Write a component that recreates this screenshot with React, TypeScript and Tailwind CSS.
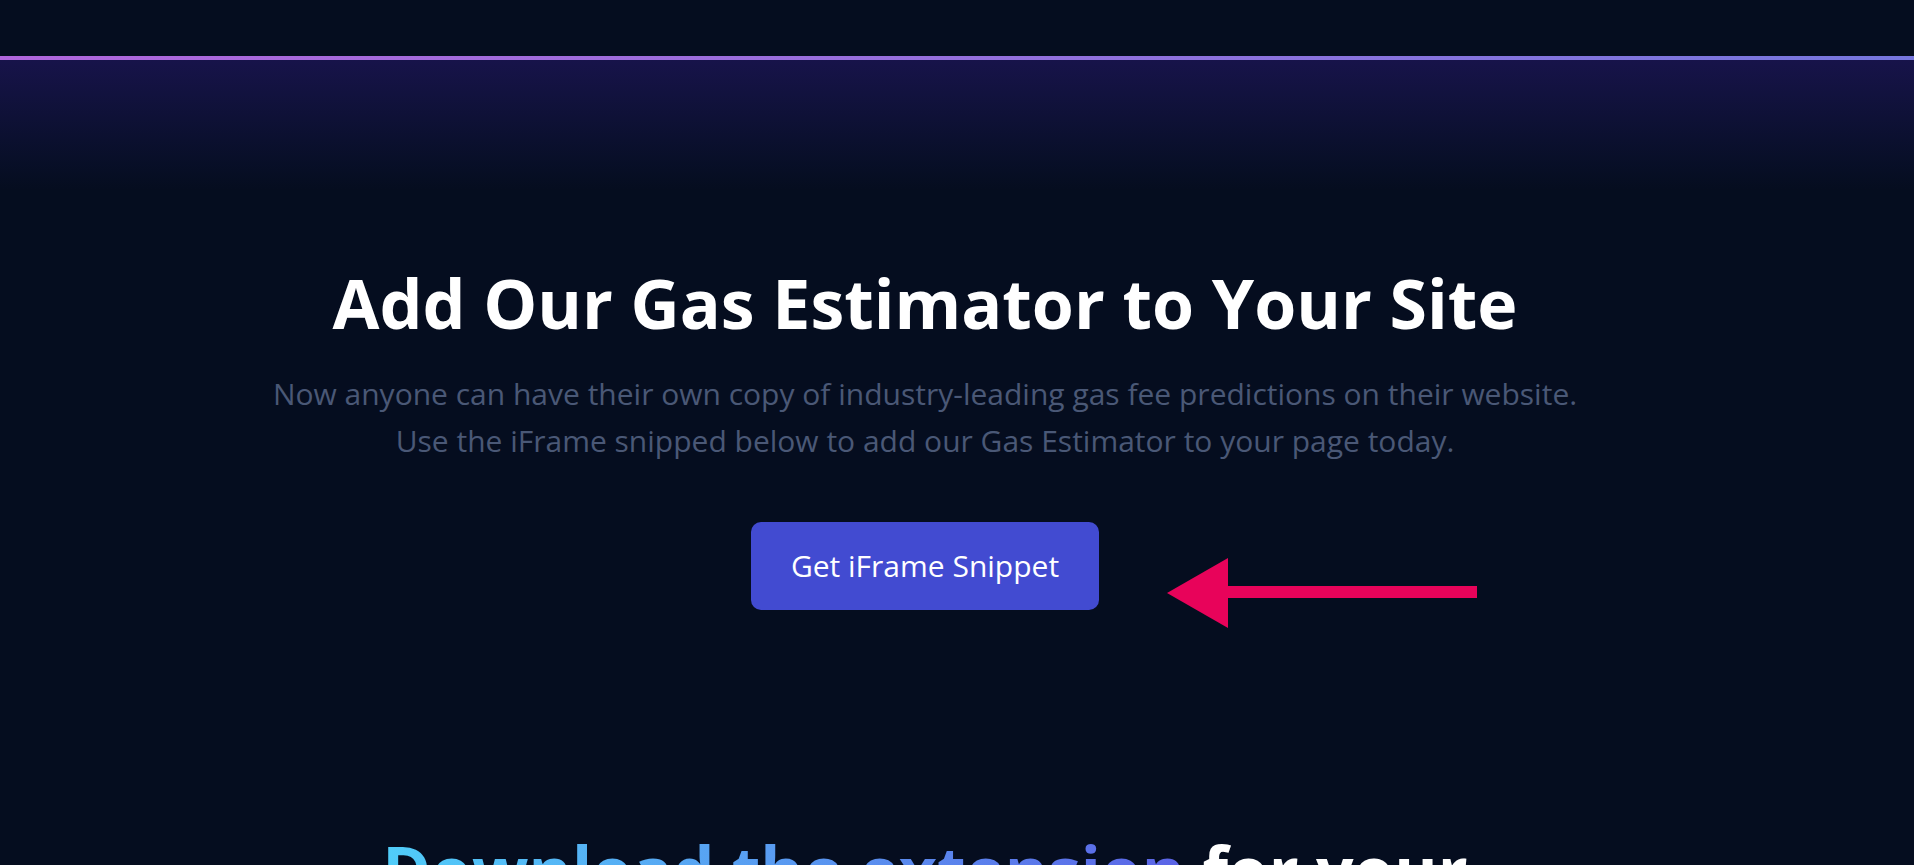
import React from "react";

export default function App() {
  return (
    <div className="relative h-screen w-full overflow-hidden bg-[#050d1f]" style={{ fontFamily: "'Open Sans', Lato, sans-serif" }}>
      <div className="h-[56px]" />
      <div className="h-[4px] w-full bg-gradient-to-r from-[#b066dc] to-[#7676de]" />
      <div className="h-[130px] w-full bg-gradient-to-b from-[#17134a] to-[#050d1f]" />
      <div className="flex flex-col items-center pr-[64px]">
        <h1 className="mt-[72px] text-[68px] font-bold leading-[1.2] text-white">
          Add Our Gas Estimator to Your Site
        </h1>
        <p className="mt-[26px] text-center text-[30px] leading-[47px] text-[#4a5876]">
          Now anyone can have their own copy of industry-leading gas fee predictions on their website.
          <br />
          Use the iFrame snipped below to add our Gas Estimator to your page today.
        </p>
        <div className="relative mt-[58px]">
          <button className="flex h-[88px] w-[348px] items-center justify-center rounded-[10px] bg-[#424bd1] text-[30px] font-medium text-white">
            Get iFrame Snippet
          </button>
          <svg className="absolute left-[416px] top-[36px]" width="310" height="70" viewBox="0 0 310 70">
            <polygon points="0,35 61,0 61,70" fill="#e8035a" />
            <rect x="60" y="28" width="250" height="12" fill="#e8035a" />
          </svg>
        </div>
        <h2 className="mt-[220px] whitespace-nowrap text-[66px] font-bold leading-[1.2] text-white">
          <span className="bg-gradient-to-r from-[#50cdf9] to-[#5b63e6] bg-clip-text text-transparent">Download the extension</span>{" "}
          for your
        </h2>
      </div>
    </div>
  );
}
